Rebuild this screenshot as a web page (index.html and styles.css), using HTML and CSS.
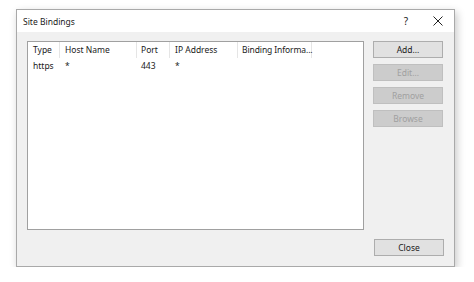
FILE: index.html
```html
<!DOCTYPE html>
<html>
<head>
<meta charset="utf-8">
<link rel="stylesheet" href="styles.css">
</head>
<body>
<div class="dialog">
  <div class="titlebar">
    <span class="title">Site Bindings</span>
    <span class="help">?</span>
    <span class="close-x">
      <svg width="10" height="10" viewBox="0 0 10 10"><path d="M0.5 0.5 L9.5 9.5 M9.5 0.5 L0.5 9.5" stroke="#222" stroke-width="1" fill="none"/></svg>
    </span>
  </div>
  <div class="body">
    <div class="main">
      <div class="list">
        <div class="row header">
          <div class="cell c1">Type</div>
          <div class="cell c2">Host Name</div>
          <div class="cell c3">Port</div>
          <div class="cell c4">IP Address</div>
          <div class="cell c5">Binding Informa...</div>
        </div>
        <div class="row data">
          <div class="cell c1">https</div>
          <div class="cell c2">*</div>
          <div class="cell c3">443</div>
          <div class="cell c4">*</div>
          <div class="cell c5"></div>
        </div>
      </div>
      <div class="buttons">
        <div class="btn">Add...</div>
        <div class="btn disabled">Edit...</div>
        <div class="btn disabled">Remove</div>
        <div class="btn disabled">Browse</div>
      </div>
    </div>
    <div class="footer">
      <div class="btn">Close</div>
    </div>
  </div>
</div>
</body>
</html>
```

FILE: styles.css
```css
html, body {
  margin: 0;
  padding: 0;
  background: #ffffff;
}
body {
  font-family: "Noto Sans", "Open Sans", sans-serif;
  font-size: 8.5px;
  color: #1a1a1a;
}
.dialog {
  margin: 9px 0 0 16px;
  width: 437px;
  height: 256px;
  border: 1px solid #a9a9a9;
  background: #f0f0f0;
  box-shadow: 2px 3px 8px rgba(0,0,0,0.22);
  display: flex;
  flex-direction: column;
}
.titlebar {
  height: 22px;
  background: #ffffff;
  display: flex;
  align-items: center;
  padding-left: 6px;
}
.title {
  flex: 1;
}
.help {
  width: 12px;
  text-align: center;
  font-size: 10px;
  margin-right: 21px;
}
.close-x {
  width: 10px;
  height: 10px;
  margin-right: 11px;
  display: flex;
}
.body {
  flex: 1;
  display: flex;
  flex-direction: column;
  padding: 9px 10px 0 10px;
}
.main {
  display: flex;
  gap: 9px;
}
.list {
  width: 335px;
  height: 187px;
  background: #ffffff;
  border: 1px solid #a0a0a0;
}
.row {
  display: flex;
  height: 15px;
  align-items: center;
}
.header {
  height: 16px;
}
.header .cell {
  border-right: 1px solid #e5e5e5;
  height: 16px;
  line-height: 16px;
}
.data {
  height: 14px;
}
.cell {
  box-sizing: border-box;
  padding-left: 5px;
  white-space: nowrap;
  overflow: hidden;
}
.c1 { width: 32px; }
.c2 { width: 77px; }
.c3 { width: 33px; padding-left: 4px; }
.c4 { width: 68px; }
.c5 { width: 74px; padding-left: 4px; overflow: visible; letter-spacing: -0.1px; }
.buttons {
  display: flex;
  flex-direction: column;
  gap: 6px;
}
.btn {
  box-sizing: border-box;
  width: 70px;
  height: 17px;
  border: 1px solid #adadad;
  background: #e1e1e1;
  text-align: center;
  line-height: 15px;
  color: #1a1a1a;
}
.btn.disabled {
  border-color: #bfbfbf;
  background: #cccccc;
  color: #a0a0a0;
}
.footer {
  display: flex;
  justify-content: flex-end;
  margin-top: 9px;
}
```
